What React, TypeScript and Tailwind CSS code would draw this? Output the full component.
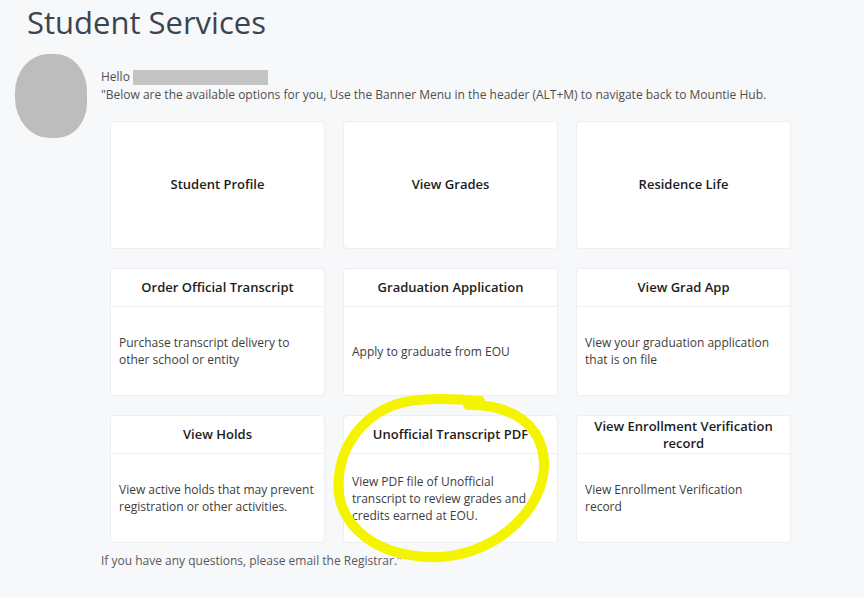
const plainCards = ["Student Profile", "View Grades", "Residence Life"];

const detailCards = [
  { title: "Order Official Transcript", body: "Purchase transcript delivery to other school or entity" },
  { title: "Graduation Application", body: "Apply to graduate from EOU" },
  { title: "View Grad App", body: "View your graduation application that is on file" },
  { title: "View Holds", body: "View active holds that may prevent registration or other activities." },
  { title: "Unofficial Transcript PDF", body: "View PDF file of Unofficial transcript to review grades and credits earned at EOU." },
  { title: "View Enrollment Verification record", body: "View Enrollment Verification record" },
];

export default function App() {
  return (
    <div
      className="relative h-[598px] w-[864px] overflow-hidden bg-[#f7f8fa]"
      style={{ fontFamily: '"Open Sans", "Liberation Sans", sans-serif' }}
    >
      <h1 className="pl-[27px] pt-[2px] text-[31px] leading-[40px] text-[#3b4550]">Student Services</h1>

      <div className="mt-[12px] flex">
        <div className="ml-[15px] h-[84px] w-[72px] shrink-0 rounded-[46%_44%_42%_48%] bg-[#bdbdbd]" />

        <div className="ml-[14px] flex flex-col">
          <div className="mt-[14px] flex items-center text-[12px] leading-[18px] text-[#4f4f4f]">
            <span>Hello</span>
            <span className="ml-[3px] inline-block h-[15px] w-[135px] bg-[#c4c4c4]" />
          </div>
          <p className="text-[12px] leading-[18px] text-[#4f4f4f]">
            "Below are the available options for you, Use the Banner Menu in the header (ALT+M) to navigate back to Mountie Hub.
          </p>

          <div className="ml-[9px] mt-[17px] grid grid-cols-[215px_215px_215px] gap-x-[18px] gap-y-[19px]">
            {plainCards.map((t) => (
              <div
                key={t}
                className="flex h-[128px] items-center justify-center rounded-[4px] border border-[#eceef1] bg-white text-[13px] font-semibold text-[#1c1c1c]"
              >
                {t}
              </div>
            ))}
            {detailCards.map((c) => (
              <div
                key={c.title}
                className="flex h-[128px] flex-col rounded-[4px] border border-[#eceef1] bg-white"
              >
                <div className="flex h-[38px] shrink-0 items-center justify-center border-b border-[#eef0f2] px-[10px] text-center text-[13px] font-semibold leading-[17px] text-[#1c1c1c]">
                  {c.title}
                </div>
                <div className="flex flex-1 items-center px-[8px] text-[12px] leading-[17px] text-[#3d3d3d]">
                  {c.body}
                </div>
              </div>
            ))}
          </div>

          <p className="mt-[9px] text-[12px] leading-[18px] text-[#595959]">
            If you have any questions, please email the Registrar."
          </p>
        </div>
      </div>

      <svg className="pointer-events-none absolute left-0 top-0" width="864" height="598" viewBox="0 0 864 598">
        <path
          d="M 468 405 C 512 404, 542 425, 544 462 C 546 510, 492 560, 428 557 C 366 554, 334 518, 339 476 C 343 438, 372 404, 418 400 C 440 398, 460 399, 480 401"
          fill="none"
          stroke="#f4f400"
          strokeWidth="10"
          strokeLinecap="round"
        />
      </svg>
    </div>
  );
}
